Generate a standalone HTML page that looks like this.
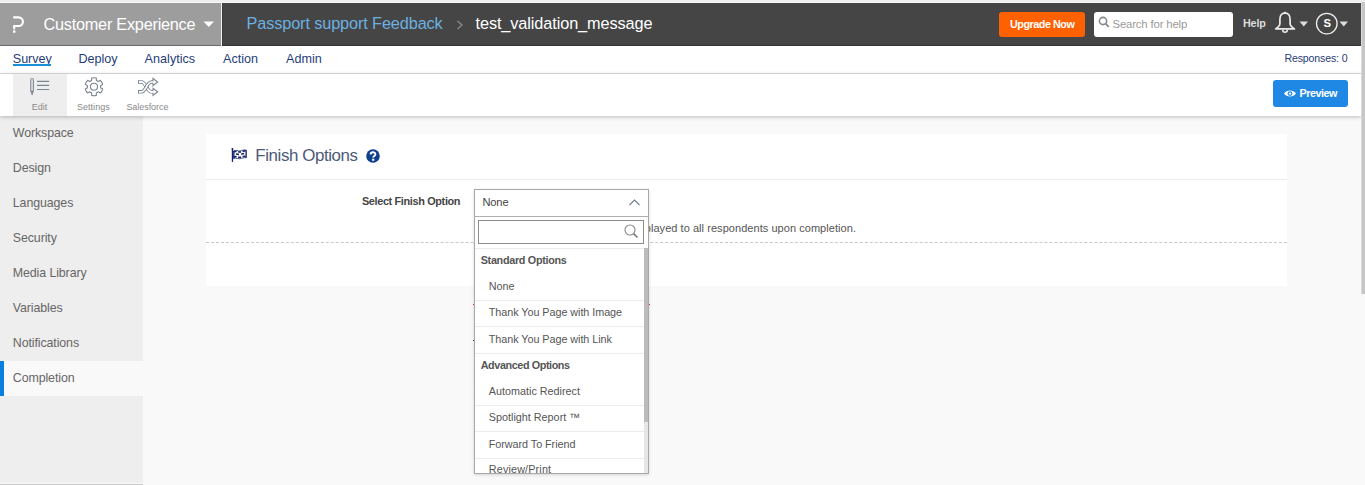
<!DOCTYPE html>
<html><head><meta charset="utf-8"><style>
*{box-sizing:border-box;margin:0;padding:0}
html,body{width:1365px;height:485px;overflow:hidden;background:#f9f9f9;font-family:"Liberation Sans",sans-serif;position:relative}
.a{position:absolute}
.t{position:absolute;white-space:nowrap;line-height:1}
</style></head><body>
<div class="a" style="left:0;top:0;width:1365px;height:2px;background:#eeeeee"></div>
<div class="a" style="left:0;top:2px;width:1365px;height:1px;background:#f8f8f8"></div>
<div class="a" style="left:0;top:3px;width:221px;height:42px;background:#9d9d9d"></div>
<div class="a" style="left:221px;top:3px;width:1px;height:43px;background:#f4f4f4"></div>
<div class="a" style="left:222px;top:3px;width:1139px;height:42px;background:#454545"></div>
<div class="a" style="left:0;top:45px;width:221px;height:1px;background:#6a6a6a"></div>
<div class="a" style="left:222px;top:45px;width:1139px;height:1px;background:#353535"></div>
<div class="a" style="left:222px;top:3px;width:1px;height:43px;background:#3c3c3c"></div>
<div class="a" style="left:0;top:46px;width:1361px;height:27px;background:#fff"></div>
<div class="a" style="left:0;top:73px;width:1361px;height:1px;background:#dedede"></div>
<div class="a" style="left:0;top:116px;width:143px;height:367px;background:#eee"></div>
<div class="a" style="left:0;top:361px;width:143px;height:35px;background:#f9f9f9"></div>
<div class="a" style="left:0;top:361px;width:4px;height:35px;background:#0a7fe0"></div>
<div class="a" style="left:0;top:484px;width:143px;height:1px;background:#c8c8c8"></div>
<div class="a" style="left:0;top:74px;width:1361px;height:42px;background:#fff;box-shadow:0 1px 4px rgba(0,0,0,.25)"></div>
<div class="a" style="left:13px;top:74px;width:54px;height:42px;background:#eee"></div>
<div class="a" style="left:1361px;top:2px;width:4px;height:292px;background:#c6c6c6;border-left:1px solid #dadada"></div>
<div class="t" style="left:43.5px;top:16.00px;font-size:16.3px;color:#fff;font-weight:400;letter-spacing:-0.25px;">Customer Experience</div>

<div class="t" style="left:246.5px;top:15.40px;font-size:16.3px;color:#6cb0e0;font-weight:400;letter-spacing:-0.12px;">Passport support Feedback</div>

<div class="t" style="left:475.5px;top:15.40px;font-size:16.3px;color:#fff;font-weight:400;letter-spacing:-0.1px;">test_validation_message</div>

<svg class="a" style="left:10px;top:14px" width="18" height="22" viewBox="0 0 18 22"><path d="M3.2,3.4 H8.6 A4.3,4.3 0 0 1 8.6,12 H4.2 V15.2" fill="none" stroke="#fff" stroke-width="2.1"/><rect x="3.1" y="16.3" width="2.3" height="2.5" fill="#fff"/></svg>
<svg class="a" style="left:203px;top:21px" width="12" height="7"><path d="M0.5,0.5 H11 L5.75,6 Z" fill="#fff"/></svg>
<svg class="a" style="left:455px;top:19px" width="10" height="12"><path d="M2.5,2 L7,6 L2.5,10" fill="none" stroke="#8a8a8a" stroke-width="1.3"/></svg>
<div class="a" style="left:999px;top:12px;width:86px;height:25px;background:#ff6000;border-radius:3px"></div>
<div class="t" style="left:1010px;top:18.66px;font-size:10.8px;color:#fff;font-weight:700;letter-spacing:-0.48px;">Upgrade Now</div>

<div class="a" style="left:1094px;top:12px;width:139px;height:25px;background:#fff;border-radius:3px"></div>
<svg class="a" style="left:1098px;top:16px" width="13" height="13"><circle cx="5" cy="5" r="3.6" fill="none" stroke="#888" stroke-width="1.6"/><path d="M7.6,7.6 L10.8,10.8" stroke="#888" stroke-width="1.8"/></svg>
<div class="t" style="left:1112.5px;top:18.95px;font-size:11.4px;color:#999;font-weight:400;letter-spacing:-0.18px;">Search for help</div>

<div class="t" style="left:1243px;top:17.76px;font-size:10.8px;color:#ddd;font-weight:700;letter-spacing:-0.2px;">Help</div>

<svg class="a" style="left:1272px;top:10px" width="26" height="25" viewBox="0 0 26 25"><path d="M13,3 C9.2,3.3 7.9,5.8 7.9,9.2 V13.8 C7.9,15.8 5.6,17.6 3.6,18.9 H22.4 C20.4,17.6 18.1,15.8 18.1,13.8 V9.2 C18.1,5.8 16.8,3.3 13,3 Z" fill="none" stroke="#ececec" stroke-width="1.7" stroke-linejoin="round"/><path d="M10.7,19.8 A2.3,2.4 0 0 0 15.3,19.8" fill="none" stroke="#e4e4e4" stroke-width="1.6"/><rect x="11.8" y="1.8" width="2.4" height="1.8" rx="0.8" fill="#ececec"/></svg>
<svg class="a" style="left:1299px;top:21px" width="10" height="6"><path d="M0.5,0.5 H9 L4.75,5.5 Z" fill="#ddd"/></svg>
<svg class="a" style="left:1315px;top:12px" width="24" height="24"><circle cx="11.8" cy="11.6" r="10.3" fill="none" stroke="#eee" stroke-width="1.3"/></svg>
<div class="t" style="left:1323.5px;top:17.83px;font-size:11.3px;color:#fff;font-weight:700;letter-spacing:0px;">S</div>

<svg class="a" style="left:1339px;top:21px" width="10" height="6"><path d="M0.5,0.5 H9 L4.75,5.5 Z" fill="#ddd"/></svg>
<div class="t" style="left:12.8px;top:53.23px;font-size:12.6px;color:#1f3d7a;font-weight:400;letter-spacing:-0.06px;">Survey</div>

<div class="a" style="left:13px;top:64px;width:38px;height:2px;background:#1a8fd8"></div>
<div class="t" style="left:78.5px;top:53.23px;font-size:12.6px;color:#1f3d7a;font-weight:400;letter-spacing:-0.04px;">Deploy</div>

<div class="t" style="left:144.6px;top:53.23px;font-size:12.6px;color:#1f3d7a;font-weight:400;letter-spacing:0.02px;">Analytics</div>

<div class="t" style="left:223px;top:53.23px;font-size:12.6px;color:#1f3d7a;font-weight:400;letter-spacing:0.02px;">Action</div>

<div class="t" style="left:286px;top:53.23px;font-size:12.6px;color:#1f3d7a;font-weight:400;letter-spacing:0px;">Admin</div>

<div class="t" style="left:1284.4px;top:53.03px;font-size:10.6px;color:#2b3d78;font-weight:400;letter-spacing:-0.15px;">Responses: 0</div>

<svg class="a" style="left:26px;top:74px" width="28" height="24" viewBox="0 0 28 24"><rect x="4.7" y="4.5" width="2.8" height="13.2" rx="0.9" fill="#d3d7dd" stroke="#7c8490" stroke-width="0.9"/><rect x="4.5" y="16.8" width="3.2" height="1.4" fill="#7c8490"/><path d="M5.2,18 H7 V20 L6.1,21.4 L5.2,20 Z" fill="#7c8490"/><path d="M11,7.4 H23.2 M11,11.4 H23.2 M11,15.5 H23.2" stroke="#7c8490" stroke-width="1.1"/></svg>
<div class="t" style="left:31.8px;top:103.18px;font-size:9px;color:#8a8a8a;font-weight:400;letter-spacing:0px;">Edit</div>

<svg class="a" style="left:83px;top:75px" width="22" height="23" viewBox="0 0 22 23"><path d="M8.63,5.54 L8.67,3.01 A9.0,9.0 0 0 1 13.33,3.01 L13.37,5.54 A6.6,6.6 0 0 1 15.15,6.57 L17.36,5.34 A9.0,9.0 0 0 1 19.69,9.37 L17.52,10.67 A6.6,6.6 0 0 1 17.52,12.73 L19.69,14.03 A9.0,9.0 0 0 1 17.36,18.06 L15.15,16.83 A6.6,6.6 0 0 1 13.37,17.86 L13.33,20.39 A9.0,9.0 0 0 1 8.67,20.39 L8.63,17.86 A6.6,6.6 0 0 1 6.85,16.83 L4.64,18.06 A9.0,9.0 0 0 1 2.31,14.03 L4.48,12.73 A6.6,6.6 0 0 1 4.48,10.67 L2.31,9.37 A9.0,9.0 0 0 1 4.64,5.34 L6.85,6.57 Z" fill="none" stroke="#7c8490" stroke-width="1.1" stroke-linejoin="round"/><circle cx="11" cy="11.7" r="3.5" fill="none" stroke="#7c8490" stroke-width="1.1"/></svg>
<div class="t" style="left:76.9px;top:102.78px;font-size:9px;color:#8a8a8a;font-weight:400;letter-spacing:0.05px;">Settings</div>

<svg class="a" style="left:136px;top:76px" width="24" height="22" viewBox="0 0 24 22"><path d="M2,6 H5.5 C10,6 10.5,15.8 15.5,15.8 H18" fill="none" stroke="#7c8490" stroke-width="3.6"/><path d="M16.6,1.6 L22.4,6 L16.6,10.4 Z" fill="#7c8490" stroke="#7c8490" stroke-width="0.3" stroke-linejoin="round"/><path d="M3,6 H5.5 C10,6 10.5,15.8 15.5,15.8 H18" fill="none" stroke="#fff" stroke-width="1.7"/><path d="M3,6 H5.5 C10,6 10.5,15.8 15.5,15.8 H18" fill="none" stroke="#fff" stroke-width="1.7"/><path d="M2,15.8 H5.5 C10,15.8 10.5,6 15.5,6 H18" fill="none" stroke="#7c8490" stroke-width="3.6"/><path d="M16.6,11.4 L22.4,15.8 L16.6,20.2 Z" fill="#7c8490" stroke="#7c8490" stroke-width="0.3" stroke-linejoin="round"/><path d="M17.5,3.6 L20.7,6 L17.5,8.4 Z M17.5,13.4 L20.7,15.8 L17.5,18.2 Z" fill="#fff"/><path d="M3,15.8 H5.5 C10,15.8 10.5,6 15.5,6 H18.5" fill="none" stroke="#fff" stroke-width="1.7"/><path d="M15,15.8 H18.5" fill="none" stroke="#fff" stroke-width="1.7"/></svg>
<div class="t" style="left:126.4px;top:102.78px;font-size:9px;color:#8a8a8a;font-weight:400;letter-spacing:-0.05px;">Salesforce</div>

<div class="a" style="left:1273px;top:80px;width:75px;height:27px;background:#1f88e5;border-radius:3px"></div>
<svg class="a" style="left:1283px;top:88px" width="14" height="11" viewBox="0 0 14 11"><path d="M1,5.5 C3.5,1.5 10.5,1.5 13,5.5 C10.5,9.5 3.5,9.5 1,5.5 Z" fill="#fff"/><circle cx="7" cy="5.6" r="2.4" fill="#1f88e5"/><circle cx="7" cy="5.6" r="1.2" fill="#fff"/></svg>
<div class="t" style="left:1299.6px;top:87.86px;font-size:10.8px;color:#fff;font-weight:700;letter-spacing:-0.5px;">Preview</div>

<div class="t" style="left:12.8px;top:126.50px;font-size:12.4px;color:#666;font-weight:400;letter-spacing:-0.1px;">Workspace</div>

<div class="t" style="left:12.8px;top:161.50px;font-size:12.4px;color:#666;font-weight:400;letter-spacing:-0.1px;">Design</div>

<div class="t" style="left:12.8px;top:196.50px;font-size:12.4px;color:#666;font-weight:400;letter-spacing:-0.1px;">Languages</div>

<div class="t" style="left:12.8px;top:231.50px;font-size:12.4px;color:#666;font-weight:400;letter-spacing:-0.1px;">Security</div>

<div class="t" style="left:12.8px;top:266.50px;font-size:12.4px;color:#666;font-weight:400;letter-spacing:-0.1px;">Media Library</div>

<div class="t" style="left:12.8px;top:301.50px;font-size:12.4px;color:#666;font-weight:400;letter-spacing:-0.1px;">Variables</div>

<div class="t" style="left:12.8px;top:336.50px;font-size:12.4px;color:#666;font-weight:400;letter-spacing:-0.1px;">Notifications</div>

<div class="t" style="left:12.8px;top:371.50px;font-size:12.4px;color:#666;font-weight:400;letter-spacing:-0.1px;">Completion</div>

<div class="a" style="left:206px;top:134px;width:1081px;height:152px;background:#fff"></div>
<div class="a" style="left:206px;top:179px;width:1081px;height:1px;background:#ebebf0"></div>
<div class="a" style="left:206px;top:242px;width:1081px;height:1px;border-top:1px dashed #c8c8c8"></div>
<svg class="a" style="left:228px;top:145px" width="22" height="20" viewBox="0 0 22 20"><defs><clipPath id="fc"><path d="M5.4,6 C8,4.5 10.5,6.5 12.2,6 C14,5.5 16,4.6 18.4,5.1 V12.8 C16,12.3 14,13.2 12.2,13.7 C10.5,14.2 8,12.2 5.4,13.6 Z"/></clipPath></defs><rect x="3.8" y="3.6" width="1.3" height="13.3" fill="#14226a"/><circle cx="4.45" cy="4" r="0.9" fill="#14226a"/><g clip-path="url(#fc)"><path d="M5.6,6.8999999999999995 C8,5.3999999999999995 10.5,7.4 12.2,6.8999999999999995 C14,6.3999999999999995 16,5.5 18,6.1" fill="none" stroke="#14226a" stroke-width="1.6" stroke-dasharray="3,1.6"/><path d="M5.6,9.5 C8,8.0 10.5,10.0 12.2,9.5 C14,9.0 16,8.1 18,8.700000000000001" fill="none" stroke="#14226a" stroke-width="1.5" stroke-dasharray="0,2.4,3,0"/><path d="M5.6,12.2 C8,10.7 10.5,12.7 12.2,12.2 C14,11.7 16,10.799999999999999 18,11.4" fill="none" stroke="#14226a" stroke-width="1.6" stroke-dasharray="3,1.6"/><path d="M5.9,5 V14 M18.1,4 V14" stroke="#14226a" stroke-width="1.2"/></g><path d="M5.4,6 C8,4.5 10.5,6.5 12.2,6 C14,5.5 16,4.6 18.4,5.1 V12.8 C16,12.3 14,13.2 12.2,13.7 C10.5,14.2 8,12.2 5.4,13.6 Z" fill="none" stroke="#14226a" stroke-width="0.8"/></svg>
<div class="t" style="left:255.3px;top:147.79px;font-size:16.9px;color:#4d5a78;font-weight:400;letter-spacing:-0.4px;">Finish Options</div>

<svg class="a" style="left:366px;top:148.5px" width="14" height="14"><circle cx="7" cy="7" r="6.8" fill="#0e3f8c"/><path d="M4.6,5.4 C4.6,2.6 9.4,2.6 9.4,5.2 C9.4,7 7.2,7 7.2,8.6" fill="none" stroke="#fff" stroke-width="1.9"/><rect x="6.1" y="9.7" width="2.2" height="2.1" fill="#fff"/></svg>
<div class="t" style="left:361.9px;top:195.57px;font-size:10.9px;color:#454545;font-weight:700;letter-spacing:-0.35px;">Select Finish Option</div>

<div class="t" style="left:0px;top:223.29px;font-size:11.0px;color:#555;font-weight:400;letter-spacing:0.05px;right:509px;left:auto;">A thank you message will be displayed to all respondents upon completion.</div>

<div class="a" style="left:473px;top:304px;width:1px;height:1px;background:#e03030"></div>
<div class="a" style="left:649px;top:304px;width:1px;height:1px;background:#e03030"></div>
<div class="a" style="left:473px;top:340px;width:1px;height:1px;background:#444"></div>
<div class="a" style="left:474px;top:189px;width:175px;height:285px;background:#fff;border:1px solid #a8a8a8;box-shadow:0 1px 3px rgba(0,0,0,.15)"></div>
<div class="a" style="left:475px;top:216px;width:173px;height:1px;background:#b0b0b0"></div>
<div class="t" style="left:482.4px;top:196.50px;font-size:11.1px;color:#444;font-weight:400;letter-spacing:-0.1px;">None</div>

<svg class="a" style="left:628px;top:197px" width="14" height="10"><path d="M1.5,8 L6.5,3 L11.5,8" fill="none" stroke="#6f7d90" stroke-width="1.1"/></svg>
<div class="a" style="left:478px;top:220px;width:166px;height:24px;border:1px solid #8c8c8c"></div>
<svg class="a" style="left:623px;top:223px" width="17" height="17"><circle cx="7" cy="7" r="5" fill="none" stroke="#888" stroke-width="1.1"/><path d="M10.6,10.6 L14.5,14.5" stroke="#777" stroke-width="1.5"/></svg>
<div class="a" style="left:475px;top:248px;width:169px;height:1px;background:#ececec"></div>
<div class="a" style="left:644px;top:248px;width:4px;height:225px;background:#e6e6e6"></div>
<div class="a" style="left:644px;top:248px;width:4px;height:174px;background:#bcbcbc"></div>
<div class="t" style="left:480.7px;top:255.16px;font-size:10.8px;color:#555;font-weight:700;letter-spacing:-0.3px;">Standard Options</div>

<div class="t" style="left:488.8px;top:281.26px;font-size:10.8px;color:#555;font-weight:400;letter-spacing:0px;">None</div>

<div class="a" style="left:475px;top:300px;width:169px;height:1px;background:#ececec"></div>
<div class="a" style="left:475px;top:326px;width:169px;height:1px;background:#ececec"></div>
<div class="a" style="left:475px;top:353px;width:169px;height:1px;background:#ececec"></div>
<div class="a" style="left:475px;top:405px;width:169px;height:1px;background:#ececec"></div>
<div class="a" style="left:475px;top:431px;width:169px;height:1px;background:#ececec"></div>
<div class="a" style="left:475px;top:458px;width:169px;height:1px;background:#ececec"></div>
<div class="t" style="left:488.8px;top:307.26px;font-size:10.8px;color:#555;font-weight:400;letter-spacing:-0.05px;">Thank You Page with Image</div>

<div class="t" style="left:488.8px;top:333.86px;font-size:10.8px;color:#555;font-weight:400;letter-spacing:-0.05px;">Thank You Page with Link</div>

<div class="t" style="left:480.7px;top:360.16px;font-size:10.8px;color:#555;font-weight:700;letter-spacing:-0.4px;">Advanced Options</div>

<div class="t" style="left:488.8px;top:385.86px;font-size:10.8px;color:#555;font-weight:400;letter-spacing:0px;">Automatic Redirect</div>

<div class="t" style="left:488.8px;top:411.86px;font-size:10.8px;color:#555;font-weight:400;letter-spacing:0px;">Spotlight Report ™</div>

<div class="t" style="left:488.8px;top:439.26px;font-size:10.8px;color:#555;font-weight:400;letter-spacing:-0.05px;">Forward To Friend</div>

<div class="a" style="left:475px;top:459px;width:169px;height:15px;overflow:hidden"><div class="t" style="left:13.8px;top:5.36px;font-size:10.8px;color:#555;font-weight:400;letter-spacing:0.15px;">Review/Print</div>
</div>
</body></html>
